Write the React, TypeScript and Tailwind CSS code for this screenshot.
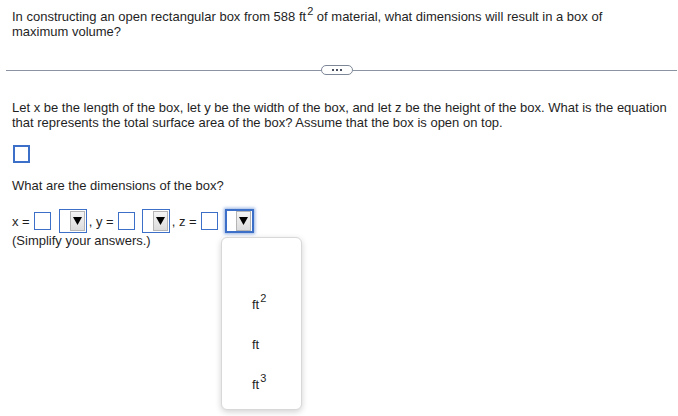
import React from 'react';

const Sup = ({ children }: { children: React.ReactNode }) => (
  <span className="relative -top-[6px] ml-[1px] text-[11px] leading-[0]">{children}</span>
);

const Blank = () => (
  <span className="inline-block w-[17px] h-[18px] border border-[#3b6fc8] bg-white" />
);

const Dropdown = ({ focused = false }: { focused?: boolean }) => (
  <span
    className={
      focused
        ? 'inline-flex items-center justify-end w-[29px] h-[24px] border-2 border-[#3b6fc8] bg-white pr-px shadow-[0_0_3px_1px_rgba(59,111,200,0.55)]'
        : 'inline-flex items-center justify-end w-[28px] h-[24px] border border-[#3b6fc8] bg-white pr-px'
    }
  >
    <span className="flex items-center justify-center w-[15px] h-[20px] border border-[#b5b5b5] bg-gradient-to-b from-[#f4f4f4] to-[#dcdcdc]">
      <svg width="9" height="8" viewBox="0 0 9 8">
        <path d="M0 0 H9 L4.5 8 Z" fill="#000" />
      </svg>
    </span>
  </span>
);

export default function App() {
  return (
    <div className="relative w-[678px] h-[416px] overflow-hidden bg-white text-[13px] leading-[15px] text-[#1f1f1f] font-['Liberation_Sans',Arial,sans-serif]">
      <p className="pt-[9px] pl-[12px] pr-[30px]">
        In constructing an open rectangular box from 588 ft<Sup>2</Sup> of material, what dimensions will result in a box of
        maximum volume?
      </p>

      {/* divider with expand button */}
      <div className="mt-[25px] ml-[6px] mr-[1px] h-[12px] flex items-center">
        <div className="w-[315px] h-px bg-[#8b94a3]" />
        <button className="w-[32px] h-[10px] rounded-full border border-[#7d8797] bg-white flex items-center justify-center gap-[2px]">
          <span className="w-[2px] h-[2px] bg-[#4a5160]" />
          <span className="w-[2px] h-[2px] bg-[#4a5160]" />
          <span className="w-[2px] h-[2px] bg-[#4a5160]" />
        </button>
        <div className="flex-1 h-px bg-[#8b94a3]" />
      </div>

      <p className="mt-[24px] pl-[12px] pr-[4px]">
        Let x be the length of the box, let y be the width of the box, and let z be the height of the box. What is the equation
        that represents the total surface area of the box? Assume that the box is open on top.
      </p>

      <div className="mt-[15px] ml-[13px] w-[17px] h-[18px] border-2 border-[#3b6fc8]" />

      <p className="mt-[15px] px-[12px]">What are the dimensions of the box?</p>

      <div className="mt-[16px] ml-[12px] h-[24px] flex items-center">
        <span>x =</span>
        <span className="ml-[4px] flex"><Blank /></span>
        <span className="ml-[8px] flex"><Dropdown /></span>
        <span className="ml-[2px]">, y =</span>
        <span className="ml-[4px] flex"><Blank /></span>
        <span className="ml-[7px] flex"><Dropdown /></span>
        <span className="ml-[2px]">, z =</span>
        <span className="ml-[4px] flex"><Blank /></span>
        <span className="ml-[7px] flex"><Dropdown focused /></span>
      </div>

      <p className="px-[12px]">(Simplify your answers.)</p>

      {/* open unit menu */}
      <div className="absolute left-[221px] top-[237px] w-[81px] h-[173px] rounded-[6px] border border-[#d8d8d8] bg-white shadow-[0_2px_6px_rgba(0,0,0,0.18)] pt-[6px]">
        <div className="h-[40px]" />
        <div className="h-[40px] flex items-center pl-[30px]">
          ft<Sup>2</Sup>
        </div>
        <div className="h-[40px] flex items-center pl-[30px]">ft</div>
        <div className="h-[40px] flex items-center pl-[30px]">
          ft<Sup>3</Sup>
        </div>
      </div>
    </div>
  );
}
